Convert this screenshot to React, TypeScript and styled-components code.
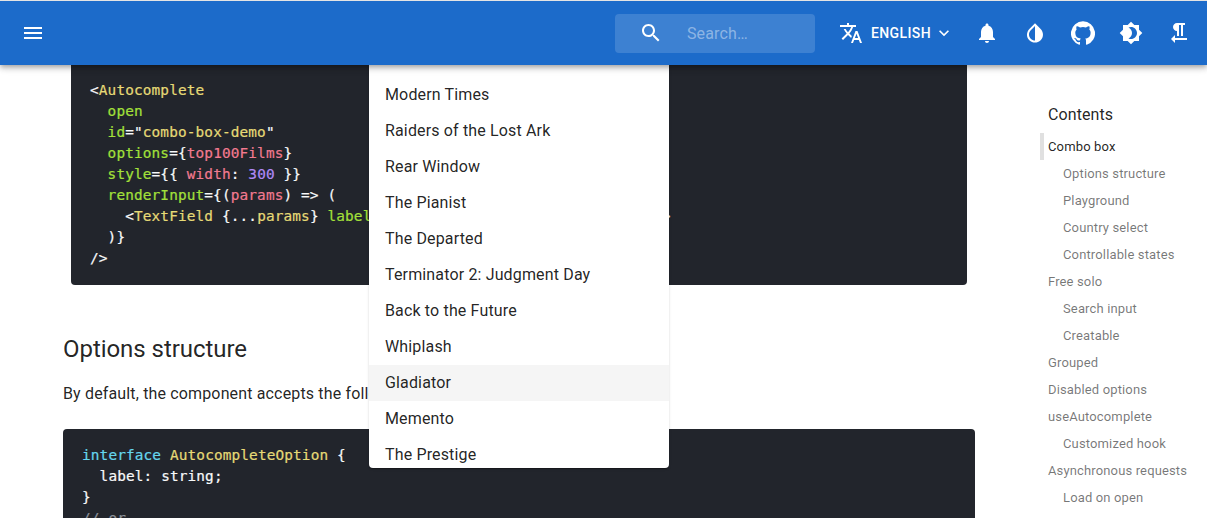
import styled, { createGlobalStyle } from "styled-components";

const ICONS = {
  menu: "M3 18h18v-2H3v2zm0-5h18v-2H3v2zm0-7v2h18V6H3z",
  search:
    "M15.5 14h-.79l-.28-.27C15.41 12.59 16 11.11 16 9.5 16 5.91 13.09 3 9.5 3S3 5.91 3 9.5 5.91 16 9.5 16c1.61 0 3.09-.59 4.23-1.57l.27.28v.79l5 4.99L20.49 19l-4.99-5zm-6 0C7.01 14 5 11.99 5 9.5S7.01 5 9.5 5 14 7.01 14 9.5 11.99 14 9.5 14z",
  language:
    "M12.87 15.07l-2.54-2.51.03-.03c1.74-1.94 2.98-4.17 3.71-6.53H17V4h-7V2H8v2H1v1.99h11.17C11.5 7.92 10.44 9.75 9 11.35 8.07 10.32 7.3 9.19 6.69 8h-2c.73 1.63 1.73 3.17 2.98 4.56l-5.09 5.02L4 19l5-5 3.11 3.11.76-2.04zM18.5 10h-2L12 22h2l1.12-3h4.75L21 22h2l-4.5-12zm-2.62 7l1.62-4.33L19.12 17h-3.24z",
  expand: "M16.59 8.59L12 13.17 7.41 8.59 6 10l6 6 6-6z",
  bell: "M12 22c1.1 0 2-.9 2-2h-4c0 1.1.89 2 2 2zm6-6v-5c0-3.07-1.64-5.64-4.5-6.32V4c0-.83-.67-1.5-1.5-1.5s-1.5.67-1.5 1.5v.68C7.63 5.36 6 7.92 6 11v5l-2 2v1h16v-1l-2-2z",
  invert:
    "M17.66 7.93L12 2.27 6.34 7.93c-3.12 3.12-3.12 8.19 0 11.31C7.9 20.8 9.95 21.58 12 21.58c2.05 0 4.1-.78 5.66-2.34 3.12-3.12 3.12-8.19 0-11.31zM12 19.59c-1.6 0-3.11-.62-4.24-1.76C6.62 16.69 6 15.19 6 13.59s.62-3.11 1.76-4.24L12 5.1v14.49z",
  github:
    "M12 .3a12 12 0 0 0-3.8 23.4c.6.1.8-.3.8-.6v-2c-3.3.7-4-1.6-4-1.6-.6-1.4-1.4-1.8-1.4-1.8-1-.7.1-.7.1-.7 1.2 0 1.9 1.2 1.9 1.2 1 1.8 2.8 1.3 3.5 1 0-.8.4-1.3.7-1.6-2.7-.3-5.5-1.3-5.5-6 0-1.2.5-2.3 1.3-3.1-.2-.4-.6-1.6 0-3.2 0 0 1-.3 3.4 1.2a11.5 11.5 0 0 1 6 0c2.3-1.5 3.3-1.2 3.3-1.2.6 1.6.2 2.8 0 3.2.9.8 1.3 1.9 1.3 3.2 0 4.6-2.8 5.6-5.5 5.9.5.4.9 1 .9 2.2v3.3c0 .3.1.7.8.6A12 12 0 0 0 12 .3",
  brightness:
    "M20 8.69V4h-4.69L12 .69 8.69 4H4v4.69L.69 12 4 15.31V20h4.69L12 23.31 15.31 20H20v-4.69L23.31 12 20 8.69zM12 18c-.89 0-1.74-.2-2.5-.55C11.56 16.5 13 14.42 13 12s-1.44-4.5-3.5-5.45C10.26 6.2 11.11 6 12 6c3.31 0 6 2.69 6 6s-2.69 6-6 6z",
  direction:
    "M10 10v5h2V4h2v11h2V4h2V2h-8C7.79 2 6 3.79 6 6s1.79 4 4 4zm-2 7v-3l-4 4 4 4v-3h12v-2H8z",
};

function Icon({ name, size = 24 }: { name: keyof typeof ICONS; size?: number }) {
  return (
    <svg width={size} height={size} viewBox="0 0 24 24" fill="currentColor">
      <path d={ICONS[name]} />
    </svg>
  );
}

const FILMS = [
  "Modern Times",
  "Raiders of the Lost Ark",
  "Rear Window",
  "The Pianist",
  "The Departed",
  "Terminator 2: Judgment Day",
  "Back to the Future",
  "Whiplash",
  "Gladiator",
  "Memento",
  "The Prestige",
];

const TOC = [
  { label: "Combo box", active: true },
  { label: "Options structure", nested: true },
  { label: "Playground", nested: true },
  { label: "Country select", nested: true },
  { label: "Controllable states", nested: true },
  { label: "Free solo" },
  { label: "Search input", nested: true },
  { label: "Creatable", nested: true },
  { label: "Grouped" },
  { label: "Disabled options" },
  { label: "useAutocomplete" },
  { label: "Customized hook", nested: true },
  { label: "Asynchronous requests" },
  { label: "Load on open", nested: true },
];

export default function App() {
  return (
    <Page>
      <GlobalStyle />
      <AppBar>
        <MenuButton>
          <Icon name="menu" />
        </MenuButton>
        <SearchBox>
          <Icon name="search" />
          <SearchPlaceholder>Search…</SearchPlaceholder>
        </SearchBox>
        <LanguageButton>
          <Icon name="language" />
          <LanguageLabel>English</LanguageLabel>
          <Icon name="expand" size={20} />
        </LanguageButton>
        <IconButton>
          <Icon name="bell" />
        </IconButton>
        <IconButton>
          <Icon name="invert" />
        </IconButton>
        <IconButton>
          <Icon name="github" />
        </IconButton>
        <IconButton>
          <Icon name="brightness" />
        </IconButton>
        <IconButton>
          <Icon name="direction" />
        </IconButton>
      </AppBar>

      <Main>
        <Content>
          <DemoCode>
            {"<"}
            <Tok $c="yellow">Autocomplete</Tok>
            {"\n  "}
            <Tok $c="green">open</Tok>
            {"\n  "}
            <Tok $c="green">id</Tok>
            {'="'}
            <Tok $c="yellow">combo-box-demo</Tok>
            {'"\n  '}
            <Tok $c="green">options</Tok>
            {"={"}
            <Tok $c="pink">top100Films</Tok>
            {"}\n  "}
            <Tok $c="green">style</Tok>
            {"={{ "}
            <Tok $c="pink">width</Tok>
            {": "}
            <Tok $c="purple">300</Tok>
            {" }}\n  "}
            <Tok $c="green">renderInput</Tok>
            {"={("}
            <Tok $c="pink">params</Tok>
            {") => (\n    <"}
            <Tok $c="yellow">TextField</Tok>
            {" {..."}
            <Tok $c="yellow">params</Tok>
            {"} "}
            <Tok $c="green">label</Tok>
            {'="'}
            <Tok $c="yellow">Combo box</Tok>
            {'" '}
            <Tok $c="green">variant</Tok>
            {'="'}
            <Tok $c="yellow">outlined</Tok>
            {'" />\n  )}\n/>'}
          </DemoCode>
          <Heading>Options structure</Heading>
          <Paragraph>
            By default, the component accepts the following options structures:
          </Paragraph>
          <OptionCode>
            <Tok $c="cyan">interface</Tok> <Tok $c="yellow">AutocompleteOption</Tok>
            {" {\n  label: string;\n}\n"}
            <Tok $c="gray">// or</Tok>
          </OptionCode>
        </Content>

        <Toc>
          <TocTitle>Contents</TocTitle>
          {TOC.map((item) => (
            <TocLink key={item.label} $active={item.active} $nested={item.nested}>
              {item.label}
            </TocLink>
          ))}
        </Toc>
      </Main>

      <Popup>
        {FILMS.map((film) => (
          <Option key={film} $hover={film === "Gladiator"}>
            {film}
          </Option>
        ))}
      </Popup>
    </Page>
  );
}

const GlobalStyle = createGlobalStyle`
  html, body {
    margin: 0;
    background: #fff;
    overflow: hidden;
  }
`;

const Page = styled.div`
  position: relative;
  height: 518px;
  overflow: hidden;
  background: #fff;
  color: rgba(0, 0, 0, 0.87);
  font-family: Roboto, sans-serif;
  border-top: 1px solid #e4e4e4;
  box-sizing: border-box;
`;

const AppBar = styled.header`
  position: relative;
  z-index: 3;
  box-sizing: border-box;
  height: 64px;
  padding: 0 4px 0 9px;
  display: flex;
  align-items: center;
  background: #1c6bca;
  color: #fff;
  box-shadow: 0 2px 4px -1px rgba(0, 0, 0, 0.2), 0 4px 5px 0 rgba(0, 0, 0, 0.14),
    0 1px 10px 0 rgba(0, 0, 0, 0.12);
`;

const IconButton = styled.div`
  width: 48px;
  height: 48px;
  display: flex;
  align-items: center;
  justify-content: center;
`;

const MenuButton = styled(IconButton)`
  margin-right: auto;
`;

const SearchBox = styled.div`
  box-sizing: border-box;
  width: 200px;
  height: 39px;
  padding-left: 24px;
  display: flex;
  align-items: center;
  border-radius: 4px;
  background: rgba(255, 255, 255, 0.15);
`;

const SearchPlaceholder = styled.span`
  margin-left: 24px;
  font-size: 16px;
  letter-spacing: 0.15px;
  color: rgba(255, 255, 255, 0.42);
`;

const LanguageButton = styled.div`
  margin-left: 16px;
  padding: 0 9px 0 8px;
  display: flex;
  align-items: center;
`;

const LanguageLabel = styled.span`
  margin: 0 3px 0 8px;
  font-size: 14px;
  font-weight: 500;
  letter-spacing: 0.4px;
  text-transform: uppercase;
`;

const Main = styled.main`
  display: flex;
  align-items: flex-start;
  padding-left: 63px;
`;

const Content = styled.div`
  width: 912px;
  flex: none;
`;

const CodeBlock = styled.pre`
  margin: 0;
  border-radius: 4px;
  background: #22252c;
  color: #f8f9fa;
  font-family: "DejaVu Sans Mono", monospace;
  font-size: 14.4px;
  line-height: 21px;
  letter-spacing: 0.13px;
  white-space: pre;
  -webkit-text-stroke: 0.2px currentColor;
`;

const DemoCode = styled(CodeBlock)`
  margin: 0 8px;
  height: 220px;
  box-sizing: border-box;
  padding: 15px 19px;
  border-radius: 0 0 4px 4px;
`;

const OptionCode = styled(CodeBlock)`
  padding: 16px 19px;
`;

const TOKEN_COLORS = {
  yellow: "#e6da76",
  green: "#a3e03a",
  pink: "#f27a90",
  purple: "#b08af7",
  cyan: "#66d6ee",
  gray: "#8a8f98",
};

const Tok = styled.span<{ $c: keyof typeof TOKEN_COLORS }>`
  color: ${(p) => TOKEN_COLORS[p.$c]};
`;

const Heading = styled.h2`
  margin: 46px 0 0;
  font-size: 24px;
  font-weight: 400;
  line-height: 36px;
  letter-spacing: -0.05px;
`;

const Paragraph = styled.p`
  margin: 15px 0 23px;
  font-size: 16px;
  line-height: 24px;
  letter-spacing: 0.15px;
`;

const Toc = styled.nav`
  margin-left: 65px;
  padding-top: 38px;
  flex: none;
  width: 167px;
  white-space: nowrap;
`;

const TocTitle = styled.div`
  padding-left: 8px;
  margin-bottom: 6px;
  font-size: 16px;
  line-height: 24px;
  letter-spacing: 0.1px;
`;

const TocLink = styled.div<{ $active?: boolean; $nested?: boolean }>`
  box-sizing: border-box;
  height: 27px;
  padding-left: ${(p) => (p.$nested ? "19px" : "4px")};
  border-left: 4px solid ${(p) => (p.$active ? "#e0e0e0" : "transparent")};
  font-size: 13px;
  line-height: 27px;
  letter-spacing: 0.14px;
  color: ${(p) => (p.$active ? "rgba(0, 0, 0, 0.87)" : "rgba(0, 0, 0, 0.54)")};
`;

const Popup = styled.ul`
  position: absolute;
  z-index: 2;
  top: 64px;
  left: 369px;
  box-sizing: border-box;
  width: 300px;
  height: 403px;
  margin: 0;
  padding: 12px 0 0;
  list-style: none;
  overflow: hidden;
  background: #fff;
  border-radius: 0 0 4px 4px;
  box-shadow: 0 2px 1px -1px rgba(0, 0, 0, 0.2), 0 1px 1px 0 rgba(0, 0, 0, 0.14),
    0 1px 3px 0 rgba(0, 0, 0, 0.12);
`;

const Option = styled.li<{ $hover?: boolean }>`
  box-sizing: border-box;
  height: 36px;
  padding: 0 16px;
  font-size: 16px;
  line-height: 36px;
  letter-spacing: 0.15px;
  background: ${(p) => (p.$hover ? "#f5f5f5" : "transparent")};
`;
